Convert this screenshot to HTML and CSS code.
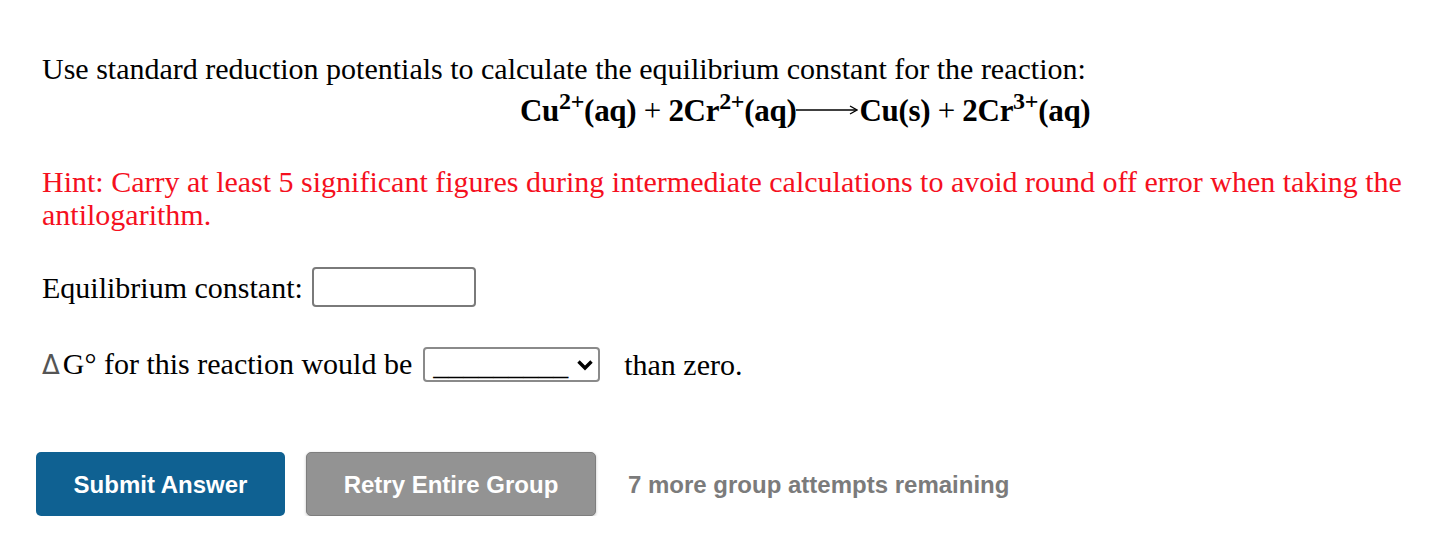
FILE: index.html
```html
<!DOCTYPE html>
<html>
<head>
<meta charset="utf-8">
<link rel="stylesheet" href="styles.css">
</head>
<body>
<div class="page">
  <p class="intro">Use standard reduction potentials to calculate the equilibrium constant for the reaction:</p>
  <div class="equation">Cu<sup>2+</sup>(aq) <span class="op">+</span> 2Cr<sup>2+</sup>(aq)<svg class="arrow" width="62" height="12" viewBox="0 0 62 12"><line x1="0" y1="6" x2="60" y2="6" stroke="#000" stroke-width="1.3"/><path d="M54 2 L61 6 L54 10" fill="none" stroke="#000" stroke-width="1.3"/></svg>Cu(s) <span class="op">+</span> 2Cr<sup>3+</sup>(aq)</div>
  <p class="hint">Hint: Carry at least 5 significant figures during intermediate calculations to avoid round off error when taking the antilogarithm.</p>
  <div class="row row-k">
    <span>Equilibrium constant:</span>
    <span class="input"></span>
  </div>
  <div class="row row-g">
    <span><span class="delta">&Delta;</span>G&deg; for this reaction would be</span>
    <span class="select"><span class="blank">_________</span><svg class="chev" width="18" height="12" viewBox="0 0 18 12"><path d="M2.5 2.5 L9 9 L15.5 2.5" fill="none" stroke="#000" stroke-width="3.4"/></svg></span>
    <span class="after">than zero.</span>
  </div>
  <div class="actions">
    <span class="btn btn-submit">Submit Answer</span>
    <span class="btn btn-retry">Retry Entire Group</span>
    <span class="remaining">7 more group attempts remaining</span>
  </div>
</div>
</body>
</html>
```
FILE: styles.css
```css
html, body {
  margin: 0;
  padding: 0;
  background: #fff;
}
.page {
  padding: 52px 42px 0 42px;
  font-family: "Liberation Serif", "Times New Roman", serif;
  font-size: 30px;
  line-height: 33px;
  color: #000;
}
.intro {
  margin: 0;
}
.equation {
  margin: 9px 0 0 478px;
  font-weight: bold;
  font-size: 31px;
  letter-spacing: -0.3px;
  white-space: nowrap;
  height: 33px;
}
.equation .op {
  font-weight: normal;
}
.equation sup {
  font-size: 24px;
  line-height: 0;
  vertical-align: 12px;
}
.arrow {
  vertical-align: 5px;
  margin-right: 1px;
}
.hint {
  margin: 38px 0 0 0;
  color: #f5101e;
}
.row {
  display: flex;
  align-items: center;
}
.row-k {
  margin-top: 36px;
  height: 40px;
}
.input {
  display: inline-block;
  width: 160px;
  height: 36px;
  border: 2px solid #7a7a7a;
  border-radius: 4px;
  margin-left: 9px;
}
.row-g {
  margin-top: 40px;
  height: 35px;
}
.delta {
  font-family: "DejaVu Sans", sans-serif;
  font-size: 26px;
  color: #555;
  margin-right: 3px;
}
.select {
  display: inline-flex;
  align-items: center;
  width: 173px;
  height: 31px;
  border: 2px solid #8a8a8a;
  border-radius: 4px;
  margin-left: 11px;
}
.blank {
  margin-left: 8px;
  line-height: 1;
}
.chev {
  margin-left: 8px;
}
.after {
  margin-left: 24px;
}
.actions {
  margin-top: 70px;
  display: flex;
  align-items: center;
  font-family: "Liberation Sans", Arial, sans-serif;
  font-weight: bold;
  font-size: 24px;
  margin-left: -6px;
}
.btn {
  display: inline-flex;
  align-items: center;
  justify-content: center;
  height: 64px;
  box-sizing: border-box;
  border-radius: 5px;
  color: #fff;
}
.btn-submit {
  width: 249px;
  background: #0f6192;
}
.btn-retry {
  width: 290px;
  margin-left: 21px;
  background: #939393;
  border: 1.5px solid #7e7e7e;
  box-shadow: 0 1px 3px rgba(0,0,0,0.25);
}
.remaining {
  margin-left: 32px;
  color: #7b7b7b;
}
```
